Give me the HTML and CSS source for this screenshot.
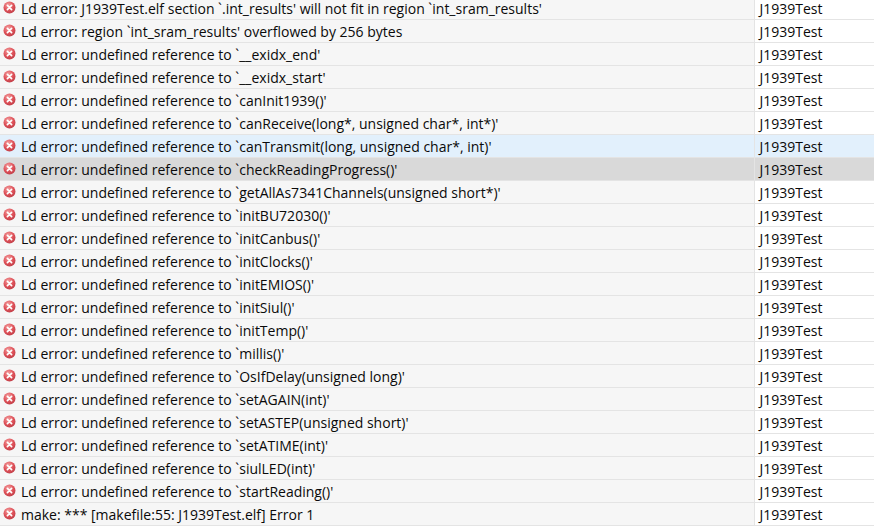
FILE: index.html
```html
<!DOCTYPE html>
<html>
<head>
<meta charset="utf-8">
<title>Problems</title>
<link rel="stylesheet" href="styles.css">
</head>
<body>
<svg class="defs" width="0" height="0" aria-hidden="true">
  <defs>
    <radialGradient id="red" cx="0.4" cy="0.3" r="0.8">
      <stop offset="0" stop-color="#f4a0a0"/>
      <stop offset="0.55" stop-color="#de5058"/>
      <stop offset="1" stop-color="#b93a44"/>
    </radialGradient>
    <symbol id="err" viewBox="0 0 13 13">
      <circle cx="6.5" cy="6.5" r="6" fill="url(#red)"/>
      <path d="M4.4 4.4 8.6 8.6M8.6 4.4 4.4 8.6" stroke="#fff" stroke-width="1.7" stroke-linecap="round" fill="none"/>
    </symbol>
  </defs>
</svg>
<div class="list">
  <div class="row"><div class="desc"><svg class="icon"><use href="#err"/></svg><span>Ld error: J1939Test.elf section `.int_results' will not fit in region `int_sram_results'</span></div><div class="res">J1939Test</div></div>
  <div class="row"><div class="desc"><svg class="icon"><use href="#err"/></svg><span>Ld error: region `int_sram_results' overflowed by 256 bytes</span></div><div class="res">J1939Test</div></div>
  <div class="row"><div class="desc"><svg class="icon"><use href="#err"/></svg><span>Ld error: undefined reference to `__exidx_end'</span></div><div class="res">J1939Test</div></div>
  <div class="row"><div class="desc"><svg class="icon"><use href="#err"/></svg><span>Ld error: undefined reference to `__exidx_start'</span></div><div class="res">J1939Test</div></div>
  <div class="row"><div class="desc"><svg class="icon"><use href="#err"/></svg><span>Ld error: undefined reference to `canInit1939()'</span></div><div class="res">J1939Test</div></div>
  <div class="row"><div class="desc"><svg class="icon"><use href="#err"/></svg><span>Ld error: undefined reference to `canReceive(long*, unsigned char*, int*)'</span></div><div class="res">J1939Test</div></div>
  <div class="row hover"><div class="desc"><svg class="icon"><use href="#err"/></svg><span>Ld error: undefined reference to `canTransmit(long, unsigned char*, int)'</span></div><div class="res">J1939Test</div></div>
  <div class="row selected"><div class="desc"><svg class="icon"><use href="#err"/></svg><span>Ld error: undefined reference to `checkReadingProgress()'</span></div><div class="res">J1939Test</div></div>
  <div class="row"><div class="desc"><svg class="icon"><use href="#err"/></svg><span>Ld error: undefined reference to `getAllAs7341Channels(unsigned short*)'</span></div><div class="res">J1939Test</div></div>
  <div class="row"><div class="desc"><svg class="icon"><use href="#err"/></svg><span>Ld error: undefined reference to `initBU72030()'</span></div><div class="res">J1939Test</div></div>
  <div class="row"><div class="desc"><svg class="icon"><use href="#err"/></svg><span>Ld error: undefined reference to `initCanbus()'</span></div><div class="res">J1939Test</div></div>
  <div class="row"><div class="desc"><svg class="icon"><use href="#err"/></svg><span>Ld error: undefined reference to `initClocks()'</span></div><div class="res">J1939Test</div></div>
  <div class="row"><div class="desc"><svg class="icon"><use href="#err"/></svg><span>Ld error: undefined reference to `initEMIOS()'</span></div><div class="res">J1939Test</div></div>
  <div class="row"><div class="desc"><svg class="icon"><use href="#err"/></svg><span>Ld error: undefined reference to `initSiul()'</span></div><div class="res">J1939Test</div></div>
  <div class="row"><div class="desc"><svg class="icon"><use href="#err"/></svg><span>Ld error: undefined reference to `initTemp()'</span></div><div class="res">J1939Test</div></div>
  <div class="row"><div class="desc"><svg class="icon"><use href="#err"/></svg><span>Ld error: undefined reference to `millis()'</span></div><div class="res">J1939Test</div></div>
  <div class="row"><div class="desc"><svg class="icon"><use href="#err"/></svg><span>Ld error: undefined reference to `OsIfDelay(unsigned long)'</span></div><div class="res">J1939Test</div></div>
  <div class="row"><div class="desc"><svg class="icon"><use href="#err"/></svg><span>Ld error: undefined reference to `setAGAIN(int)'</span></div><div class="res">J1939Test</div></div>
  <div class="row"><div class="desc"><svg class="icon"><use href="#err"/></svg><span>Ld error: undefined reference to `setASTEP(unsigned short)'</span></div><div class="res">J1939Test</div></div>
  <div class="row"><div class="desc"><svg class="icon"><use href="#err"/></svg><span>Ld error: undefined reference to `setATIME(int)'</span></div><div class="res">J1939Test</div></div>
  <div class="row"><div class="desc"><svg class="icon"><use href="#err"/></svg><span>Ld error: undefined reference to `siulLED(int)'</span></div><div class="res">J1939Test</div></div>
  <div class="row"><div class="desc"><svg class="icon"><use href="#err"/></svg><span>Ld error: undefined reference to `startReading()'</span></div><div class="res">J1939Test</div></div>
  <div class="row"><div class="desc"><svg class="icon"><use href="#err"/></svg><span>make: *** [makefile:55: J1939Test.elf] Error 1</span></div><div class="res">J1939Test</div></div>
</div>
</body>
</html>
```
FILE: styles.css
```css
html, body {
  margin: 0;
  padding: 0;
  width: 874px;
  height: 526px;
  overflow: hidden;
  background: #fff;
}
.defs {
  display: block;
  height: 0;
}
.list {
  margin-top: -3px;
  font-family: "Open Sans", "Noto Sans", sans-serif;
  font-size: 14px;
  color: #0a0a0a;
}
.row {
  display: flex;
  height: 23px;
  box-sizing: border-box;
  border-bottom: 1px solid #e4e4e4;
}
.desc {
  width: 755px;
  background: #f6f6f6;
  display: flex;
  align-items: center;
  gap: 5px;
  padding-left: 3px;
  padding-top: 1px;
  box-sizing: border-box;
  border-right: 1px solid #e4e4e4;
  white-space: nowrap;
}
.res {
  flex: 1;
  padding-left: 4.5px;
  line-height: 23px;
  background: #fff;
}
.icon {
  width: 13px;
  height: 13px;
  flex: none;
  margin-top: -2px;
}
.hover .desc, .hover .res {
  background: #e2f0fc;
}
.selected .desc, .selected .res {
  background: #d9d9d9;
}
```
